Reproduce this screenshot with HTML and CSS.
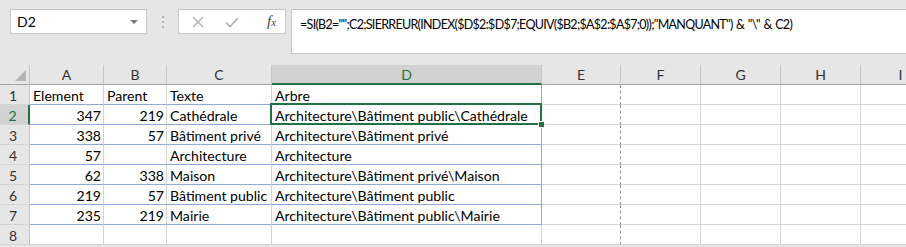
FILE: index.html
```html
<!DOCTYPE html>
<html lang="fr">
<head>
  <meta charset="UTF-8">
  <meta name="viewport" content="width=device-width, initial-scale=1.0">
  <title>Arbre</title>
  <link rel="stylesheet" href="styles.css">
</head>
<body>
  <div class="toolbar">
    <div class="namebox">
      <span>D2</span>
      <span class="arrow"></span>
    </div>
    <div class="grip"><i></i><i></i><i></i></div>
    <div class="fnbox">
      <svg width="14" height="14" viewBox="0 0 14 14"><path d="M2 2 L12 12 M12 2 L2 12" stroke="#b0b0b0" stroke-width="1.4" fill="none"/></svg>
      <svg width="16" height="14" viewBox="0 0 16 14"><path d="M2 7.5 L6 11.5 L14 3" stroke="#b0b0b0" stroke-width="1.6" fill="none"/></svg>
      <span class="fx">f<small>x</small></span>
    </div>
    <div class="formula">=SI(B2="";C2;SIERREUR(INDEX($D$2:$D$7;EQUIV($B2;$A$2:$A$7;0));"MANQUANT") &amp; "\" &amp; C2)</div>
  </div>

  <div class="sheet">
    <!-- en-tetes de colonnes -->
    <div class="corner"><span class="tri"></span></div>
    <div class="colhead">A</div>
    <div class="colhead">B</div>
    <div class="colhead">C</div>
    <div class="colhead sel">D</div>
    <div class="colhead">E</div>
    <div class="colhead">F</div>
    <div class="colhead">G</div>
    <div class="colhead">H</div>
    <div class="colhead">I</div>

    <!-- ligne 1 -->
    <div class="rowhead">1</div>
    <div class="cell tb">Element</div>
    <div class="cell tb">Parent</div>
    <div class="cell tb">Texte</div>
    <div class="cell tb tr">Arbre</div>
    <div class="cell brk"></div><div class="cell"></div><div class="cell"></div><div class="cell"></div><div class="cell"></div>

    <!-- ligne 2 -->
    <div class="rowhead sel">2</div>
    <div class="cell tb num">347</div>
    <div class="cell tb num">219</div>
    <div class="cell tb">Cathédrale</div>
    <div class="cell tb tr active">Architecture\Bâtiment public\Cathédrale<span class="handle"></span></div>
    <div class="cell brk"></div><div class="cell"></div><div class="cell"></div><div class="cell"></div><div class="cell"></div>

    <!-- ligne 3 -->
    <div class="rowhead">3</div>
    <div class="cell tb num">338</div>
    <div class="cell tb num">57</div>
    <div class="cell tb">Bâtiment privé</div>
    <div class="cell tb tr">Architecture\Bâtiment privé</div>
    <div class="cell brk"></div><div class="cell"></div><div class="cell"></div><div class="cell"></div><div class="cell"></div>

    <!-- ligne 4 -->
    <div class="rowhead">4</div>
    <div class="cell tb num">57</div>
    <div class="cell tb num"></div>
    <div class="cell tb">Architecture</div>
    <div class="cell tb tr">Architecture</div>
    <div class="cell brk"></div><div class="cell"></div><div class="cell"></div><div class="cell"></div><div class="cell"></div>

    <!-- ligne 5 -->
    <div class="rowhead">5</div>
    <div class="cell tb num">62</div>
    <div class="cell tb num">338</div>
    <div class="cell tb">Maison</div>
    <div class="cell tb tr">Architecture\Bâtiment privé\Maison</div>
    <div class="cell brk"></div><div class="cell"></div><div class="cell"></div><div class="cell"></div><div class="cell"></div>

    <!-- ligne 6 -->
    <div class="rowhead">6</div>
    <div class="cell tb num">219</div>
    <div class="cell tb num">57</div>
    <div class="cell tb">Bâtiment public</div>
    <div class="cell tb tr">Architecture\Bâtiment public</div>
    <div class="cell brk"></div><div class="cell"></div><div class="cell"></div><div class="cell"></div><div class="cell"></div>

    <!-- ligne 7 -->
    <div class="rowhead">7</div>
    <div class="cell tb num">235</div>
    <div class="cell tb num">219</div>
    <div class="cell tb">Mairie</div>
    <div class="cell tb tr">Architecture\Bâtiment public\Mairie</div>
    <div class="cell brk"></div><div class="cell"></div><div class="cell"></div><div class="cell"></div><div class="cell"></div>

    <!-- ligne 8 -->
    <div class="rowhead">8</div>
    <div class="cell"></div><div class="cell"></div><div class="cell"></div><div class="cell"></div>
    <div class="cell brk"></div><div class="cell"></div><div class="cell"></div><div class="cell"></div><div class="cell"></div>
  </div>
</body>
</html>
```

FILE: styles.css
```css
/* Feuille de calcul facon Excel */
body {
  margin: 0;
  padding: 0;
  width: 906px;
  height: 247px;
  overflow: hidden;
  background-color: #e6e6e6;
  font-family: Lato, "Open Sans", sans-serif;
  color: #000;
}

.toolbar {
  display: flex;
  align-items: flex-start;
  height: 65px;
  padding: 9px 0 0 10px;
  box-sizing: border-box;
  background-color: #e6e6e6;
}

.namebox {
  width: 137px;
  height: 25px;
  box-sizing: border-box;
  background: #fff;
  border: 1px solid #c6c6c6;
  display: flex;
  align-items: center;
  justify-content: space-between;
  padding: 0 8px 0 6px;
  font-size: 14px;
}

.arrow {
  width: 0;
  height: 0;
  border-left: 4px solid transparent;
  border-right: 4px solid transparent;
  border-top: 4px solid #7a7a7a;
}

.grip {
  width: 31px;
  height: 25px;
  display: flex;
  flex-direction: column;
  align-items: center;
  justify-content: center;
  gap: 3px;
}

.grip i {
  width: 2px;
  height: 2px;
  background: #b4b4b4;
}

.fnbox {
  width: 108px;
  height: 25px;
  box-sizing: border-box;
  background: #fff;
  border: 1px solid #c6c6c6;
  display: flex;
  align-items: center;
  padding: 0 0 0 12px;
  gap: 19px;
}

.fx {
  font-family: "Liberation Serif", serif;
  font-style: italic;
  font-size: 15px;
  color: #444;
  margin-left: 8px;
}

.fx small {
  font-size: 11px;
}

.formula {
  flex: 1;
  margin-left: 5px;
  margin-right: -4px;
  height: 45px;
  box-sizing: border-box;
  background: #fff;
  border: 1px solid #c6c6c6;
  padding: 7px 0 0 8px;
  font-size: 12.5px;
  letter-spacing: -0.7px;
  word-spacing: 1px;
  white-space: nowrap;
}

.sheet {
  display: grid;
  grid-template-columns: 30px 74px 63px 105px 270px 79px 80px 80px 80px 80px;
  grid-template-rows: repeat(9, 20px);
  background: #fff;
}

.corner,
.colhead,
.rowhead,
.cell {
  box-sizing: border-box;
}

.corner {
  background: #e6e6e6;
  border-right: 1px solid #c6c6c6;
  border-bottom: 1px solid #a6a6a6;
  position: relative;
}

.tri {
  position: absolute;
  right: 3px;
  bottom: 3px;
  width: 0;
  height: 0;
  border-left: 11px solid transparent;
  border-bottom: 11px solid #b4b4b4;
}

.colhead {
  background: #e6e6e6;
  border-right: 1px solid #c6c6c6;
  border-bottom: 1px solid #a6a6a6;
  text-align: center;
  font-size: 14px;
  line-height: 19px;
  color: #333;
}

.colhead.sel {
  background: #d2d2d2;
  color: #217346;
  border-bottom: 2px solid #217346;
}

.rowhead {
  background: #e6e6e6;
  border-right: 1px solid #c6c6c6;
  border-bottom: 1px solid #d4d4d4;
  text-align: center;
  font-size: 14px;
  line-height: 19px;
  color: #333;
  padding: 1px 3px 0 0;
}

.rowhead.sel {
  background: #d2d2d2;
  color: #217346;
  border-right: 2px solid #217346;
}

.cell {
  border-right: 1px solid #d4d4d4;
  border-bottom: 1px solid #d4d4d4;
  font-size: 14.1px;
  line-height: 19px;
  padding: 1px 2px 0 3px;
  white-space: nowrap;
  position: relative;
}

.cell.num {
  text-align: right;
  padding-right: 2px;
}

/* bordures du tableau A1:D7 */
.cell.tb {
  border-bottom-color: #8ea9db;
}

.cell.tr {
  border-right-color: #8ea9db;
}

/* saut de page entre E et F */
.cell.brk {
  border-right: 1px dashed #8c8c8c;
}

.cell.active::after {
  content: "";
  position: absolute;
  top: -2px;
  left: -2px;
  right: -1px;
  bottom: -1px;
  border: 2px solid #217346;
}

.handle {
  position: absolute;
  right: -4px;
  bottom: -4px;
  width: 5px;
  height: 5px;
  background: #217346;
  border: 1px solid #fff;
  z-index: 2;
}
```
